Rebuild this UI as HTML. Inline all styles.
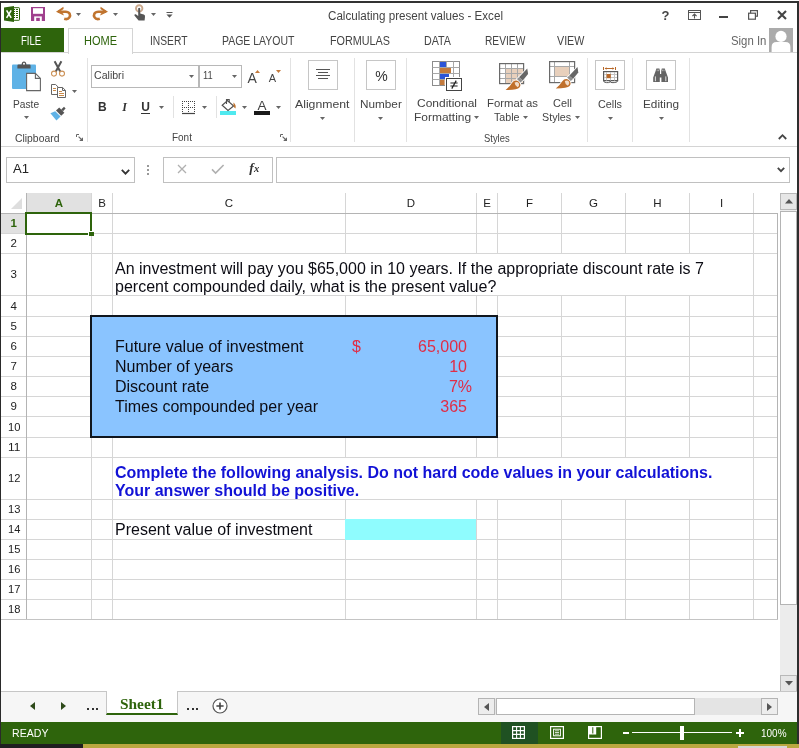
<!DOCTYPE html>
<html><head><meta charset="utf-8"><title>Calculating present values - Excel</title>
<style>
*{margin:0;padding:0;box-sizing:border-box}
html,body{width:799px;height:748px;overflow:hidden;background:#fff}
body{position:relative;will-change:transform;font-family:"Liberation Sans",sans-serif;font-size:12px;color:#444}
.a{position:absolute}
.t{position:absolute;white-space:pre;line-height:1}
.cell{font-size:16px;color:#0c0c14}
.red{color:#e02d46}
.hl{position:absolute;height:1px;background:#d6d6d6}
.vl{position:absolute;width:1px;background:#d6d6d6}
svg{position:absolute;overflow:visible}
</style></head>
<body>
<div class="a" style="left:0px;top:1px;width:799px;height:2px;background:#333;"></div>
<div class="a" style="left:0px;top:1px;width:1px;height:747px;background:#2a2a2a;"></div>
<div class="a" style="left:797px;top:1px;width:2px;height:747px;background:#2e2e2e;"></div>
<div class="t" style="left:328.00px;top:10.34px;font-size:12px;color:#444;transform:scaleX(0.968);transform-origin:0 0;">Calculating present values - Excel</div>
<svg style="left:4px;top:6px" width="17" height="16" viewBox="0 0 17 16"><rect x="9.5" y="1.7" width="6" height="12.6" rx="0.6" fill="#fff" stroke="#2e640c" stroke-width="1"/>
<path d="M10 3.5H11M10 5.5H11M10 7.5H11M10 9.5H11M10 11.5H11M12 3.5H14M12 5.5H14M12 7.5H14M12 9.5H14M12 11.5H14" stroke="#2e640c" stroke-width="1" fill="none"/>
<path d="M0 1.6L10 0V16L0 14.4Z" fill="#2e640c"/>
<path d="M2.6 4.4L7.2 11.8M7.2 4.4L2.6 11.8" stroke="#fff" stroke-width="1.6" fill="none"/></svg>
<svg style="left:31px;top:7px" width="14" height="14" viewBox="0 0 14 14"><rect x="0" y="0" width="14" height="14" fill="#a0408e"/>
<rect x="2" y="1.2" width="10" height="5.6" fill="#fff"/>
<rect x="3.2" y="9.4" width="7.6" height="4.6" fill="#fff"/>
<rect x="5.2" y="10.8" width="3.6" height="3.2" fill="#a0408e"/></svg>
<svg style="left:55px;top:6px" width="18" height="15" viewBox="0 0 18 15"><path d="M8.4 0.8L1 5.8L8.8 9.6L8.2 7.6L4.6 5.8L8.6 3Z" fill="#c0742f"/>
<path d="M3 5.7H10.5C14.8 5.7 15.8 9.2 14.4 11.4C13.4 13 11.4 13.5 9.2 12.8" fill="none" stroke="#c0742f" stroke-width="2.6"/></svg>
<svg style="left:76.0px;top:13px" width="5" height="3.0" viewBox="0 0 5 3.0"><path d="M0 0H5L2.5 3.0Z" fill="#666"/></svg>
<svg style="left:91px;top:6px" width="18" height="15" viewBox="0 0 18 15"><path d="M9.6 0.8L17 5.8L9.2 9.6L9.8 7.6L13.4 5.8L9.4 3Z" fill="#c0742f"/>
<path d="M15 5.7H7.5C3.2 5.7 2.2 9.2 3.6 11.4C4.6 13 6.6 13.5 8.8 12.8" fill="none" stroke="#c0742f" stroke-width="2.6"/></svg>
<svg style="left:113.0px;top:13px" width="5" height="3.0" viewBox="0 0 5 3.0"><path d="M0 0H5L2.5 3.0Z" fill="#666"/></svg>
<svg style="left:133px;top:4px" width="14" height="18" viewBox="0 0 14 18"><circle cx="6.2" cy="4.4" r="3.2" fill="none" stroke="#caa88c" stroke-width="1.9"/>
<path d="M5.2 4.2Q6.2 3.2 7.2 4.2V9.6L10.8 10.6Q12.2 11.2 12 12.8L11.6 16.6H5.6L1.4 11.4Q1.2 10 2.8 10.2L5.2 12Z" fill="#555"/></svg>
<svg style="left:151.0px;top:13px" width="5" height="3.0" viewBox="0 0 5 3.0"><path d="M0 0H5L2.5 3.0Z" fill="#666"/></svg>
<svg style="left:166px;top:12px" width="7" height="6" viewBox="0 0 7 6"><path d="M0.5 0.5H6.5" stroke="#555" stroke-width="1"/><path d="M0.5 2.6H6.5L3.5 5.8Z" fill="#555"/></svg>
<div class="t" style="left:661.52px;top:9.00px;font-size:13px;color:#444;font-weight:700;">?</div>
<svg style="left:688px;top:10px" width="13" height="10" viewBox="0 0 13 10"><rect x="0.5" y="0.5" width="12" height="9" fill="#fff" stroke="#555" stroke-width="1"/>
<path d="M0.5 2.5H12.5" stroke="#555" stroke-width="1"/><path d="M6.5 8.4V4.2M4.4 6.2L6.5 4.1L8.6 6.2" stroke="#555" stroke-width="1.1" fill="none"/></svg>
<div class="a" style="left:719px;top:16px;width:9px;height:2px;background:#444;"></div>
<svg style="left:748px;top:10px" width="10" height="10" viewBox="0 0 10 10"><rect x="2.6" y="0.6" width="6.8" height="5.6" fill="none" stroke="#555" stroke-width="1.2"/>
<rect x="0.6" y="3.2" width="6.8" height="6" fill="#fff" stroke="#555" stroke-width="1.2"/></svg>
<svg style="left:777px;top:10px" width="10" height="10" viewBox="0 0 10 10"><path d="M1 1L9 9M9 1L1 9" stroke="#444" stroke-width="2.1"/></svg>
<div class="a" style="left:1px;top:28px;width:63px;height:25px;background:#2e640c;"></div>
<div class="t" style="left:20.86px;top:35.34px;font-size:12px;color:#fff;transform:scaleX(0.800);transform-origin:0 0;">FILE</div>
<div class="a" style="left:1px;top:52px;width:796px;height:1px;background:#d4d4d4;"></div>
<div class="a" style="left:68px;top:28px;width:65px;height:26px;background:#fff;border:1px solid #d4d4d4;border-bottom:none"></div>
<div class="t" style="left:84.00px;top:35.34px;font-size:12px;color:#2e640c;transform:scaleX(0.917);transform-origin:0 0;">HOME</div>
<div class="t" style="left:149.50px;top:35.34px;font-size:12px;color:#444;transform:scaleX(0.856);transform-origin:0 0;">INSERT</div>
<div class="t" style="left:222.00px;top:35.34px;font-size:12px;color:#444;transform:scaleX(0.874);transform-origin:0 0;">PAGE LAYOUT</div>
<div class="t" style="left:329.50px;top:35.34px;font-size:12px;color:#444;transform:scaleX(0.900);transform-origin:0 0;">FORMULAS</div>
<div class="t" style="left:424.00px;top:35.34px;font-size:12px;color:#444;transform:scaleX(0.893);transform-origin:0 0;">DATA</div>
<div class="t" style="left:484.70px;top:35.34px;font-size:12px;color:#444;transform:scaleX(0.851);transform-origin:0 0;">REVIEW</div>
<div class="t" style="left:557.00px;top:35.34px;font-size:12px;color:#444;transform:scaleX(0.893);transform-origin:0 0;">VIEW</div>
<div class="t" style="left:731.00px;top:34.64px;font-size:12px;color:#666;transform:scaleX(0.948);transform-origin:0 0;">Sign In</div>
<svg style="left:769px;top:28px" width="24" height="24" viewBox="0 0 24 24"><rect width="24" height="24" fill="#ababab"/>
<circle cx="12" cy="8.4" r="5.6" fill="#fff"/>
<path d="M2.6 24V19Q2.6 14 7.6 14H16.4Q21.4 14 21.4 19V24Z" fill="#fff"/></svg>
<div class="a" style="left:1px;top:146px;width:796px;height:1px;background:#d4d4d4;"></div>
<div class="a" style="left:87px;top:58px;width:1px;height:84px;background:#e2e2e2;"></div>
<div class="a" style="left:290px;top:58px;width:1px;height:84px;background:#e2e2e2;"></div>
<div class="a" style="left:354px;top:58px;width:1px;height:84px;background:#e2e2e2;"></div>
<div class="a" style="left:406px;top:58px;width:1px;height:84px;background:#e2e2e2;"></div>
<div class="a" style="left:587px;top:58px;width:1px;height:84px;background:#e2e2e2;"></div>
<div class="a" style="left:632px;top:58px;width:1px;height:84px;background:#e2e2e2;"></div>
<div class="a" style="left:689px;top:58px;width:1px;height:84px;background:#e2e2e2;"></div>
<svg style="left:12px;top:61px" width="29" height="30" viewBox="0 0 29 30"><rect x="0" y="3.6" width="24" height="24.4" rx="1" fill="#5fb2e6"/>
<path d="M5.4 7.6V4.6Q5.4 3.4 6.6 3.4H9.6Q9.8 0.4 12 0.4Q14.2 0.4 14.4 3.4H17.4Q18.6 3.4 18.6 4.6V7.6Z" fill="#555"/>
<circle cx="12" cy="2.8" r="1" fill="#fff"/>
<path d="M14.6 12.4H23.4L28.4 17.4V29.6H14.6Z" fill="#fff" stroke="#666" stroke-width="1.1"/>
<path d="M23.4 12.4V17.4H28.4" fill="none" stroke="#666" stroke-width="1.1"/></svg>
<div class="t" style="left:12.70px;top:99.27px;font-size:11.5px;color:#444;transform:scaleX(0.887);transform-origin:0 0;">Paste</div>
<svg style="left:24.0px;top:116.2px" width="5" height="3.0" viewBox="0 0 5 3.0"><path d="M0 0H5L2.5 3.0Z" fill="#666"/></svg>
<svg style="left:51px;top:61px" width="14" height="16" viewBox="0 0 14 16"><path d="M3.6 0.2L9.2 10.4M10.4 0.2L4.8 10.4" stroke="#555" stroke-width="2" fill="none"/>
<circle cx="3" cy="12.6" r="2.5" fill="#fff" stroke="#cc9258" stroke-width="1.1"/>
<circle cx="11" cy="12.6" r="2.5" fill="#fff" stroke="#cc9258" stroke-width="1.1"/></svg>
<svg style="left:51px;top:84px" width="16" height="14" viewBox="0 0 16 14"><path d="M0.5 0.5H4.6L7.5 3.4V10.5H0.5Z" fill="#fff" stroke="#666" stroke-width="1"/>
<path d="M2 4.5H5M2 6.5H5" stroke="#c98a4a" stroke-width="1"/>
<path d="M6.5 3.5H11.6L14.5 6.4V13.5H6.5Z" fill="#fff" stroke="#666" stroke-width="1"/>
<path d="M11.5 3.5V6.5H14.5" fill="none" stroke="#666" stroke-width="1"/>
<path d="M8 7.5H11M8 9.5H13M8 11.5H13" stroke="#c98a4a" stroke-width="1"/></svg>
<svg style="left:72.0px;top:90px" width="5" height="3.0" viewBox="0 0 5 3.0"><path d="M0 0H5L2.5 3.0Z" fill="#666"/></svg>
<svg style="left:50px;top:106px" width="16" height="15" viewBox="0 0 16 15"><path d="M11.2 3.4L14 0.8L15.6 2.4L13 5.2Z" fill="#555"/>
<path d="M6 4.6L9.2 1.6L14.4 6.8L11.2 9.8Z" fill="#555"/>
<path d="M0.4 7.2L5.2 5.2L10.6 10.6L6.4 14.4Z" fill="#5fb2e6"/></svg>
<div class="t" style="left:14.60px;top:132.57px;font-size:11.5px;color:#444;transform:scaleX(0.902);transform-origin:0 0;">Clipboard</div>
<svg style="left:76px;top:134px" width="8" height="8" viewBox="0 0 8 8"><path d="M0.5 3V0.5H3" fill="none" stroke="#666" stroke-width="1"/><path d="M2.6 2.6L6 6" stroke="#666" stroke-width="1.1"/><path d="M7 3.2V7H3.2Z" fill="#666"/></svg>
<div class="a" style="left:91px;top:65px;width:108px;height:23px;background:#fff;border:1px solid #b8b8b8;"></div>
<div class="a" style="left:199px;top:65px;width:43px;height:23px;background:#fff;border:1px solid #b8b8b8;"></div>
<div class="t" style="left:94.00px;top:70.27px;font-size:11.5px;color:#444;transform:scaleX(0.920);transform-origin:0 0;">Calibri</div>
<svg style="left:189.0px;top:75.2px" width="5" height="3.0" viewBox="0 0 5 3.0"><path d="M0 0H5L2.5 3.0Z" fill="#666"/></svg>
<div class="t" style="left:202.80px;top:69.77px;font-size:11.5px;color:#444;transform:scaleX(0.812);transform-origin:0 0;">11</div>
<svg style="left:232.0px;top:75.2px" width="5" height="3.0" viewBox="0 0 5 3.0"><path d="M0 0H5L2.5 3.0Z" fill="#666"/></svg>
<div class="t" style="left:247.58px;top:70.95px;font-size:14px;color:#444;">A</div>
<svg style="left:255px;top:70px" width="5" height="3" viewBox="0 0 5 3"><path d="M0 3H5L2.5 0Z" fill="#c47a3c"/></svg>
<div class="t" style="left:268.83px;top:73.49px;font-size:11px;color:#444;">A</div>
<svg style="left:276px;top:70px" width="5" height="3" viewBox="0 0 5 3"><path d="M0 0H5L2.5 3Z" fill="#c47a3c"/></svg>
<div class="t" style="left:98.06px;top:101.34px;font-size:12px;color:#333;font-weight:700;">B</div>
<div class="t" style="left:122.16px;top:101.45px;font-size:12px;color:#333;font-style:italic;font-family:'Liberation Serif',serif;font-weight:bold">I</div>
<div class="t" style="left:141.16px;top:101.14px;font-size:12px;color:#333;font-weight:700;">U</div>
<div class="a" style="left:141px;top:113px;width:9px;height:1px;background:#333;"></div>
<svg style="left:159.0px;top:106px" width="5" height="3.0" viewBox="0 0 5 3.0"><path d="M0 0H5L2.5 3.0Z" fill="#666"/></svg>
<div class="a" style="left:173px;top:96px;width:1px;height:22px;background:#e2e2e2;"></div>
<svg style="left:182px;top:101px" width="13" height="13" viewBox="0 0 13 13"><path d="M0 0.5H13M0 6.5H13" stroke="#444" stroke-width="1" stroke-dasharray="1 1" fill="none"/>
<path d="M0.5 0V11M6.5 0V11M12.5 0V11" stroke="#444" stroke-width="1" stroke-dasharray="1 1" fill="none"/>
<path d="M0 12.5H13" stroke="#444" stroke-width="1.2"/></svg>
<svg style="left:202.0px;top:106px" width="5" height="3.0" viewBox="0 0 5 3.0"><path d="M0 0H5L2.5 3.0Z" fill="#666"/></svg>
<div class="a" style="left:216px;top:96px;width:1px;height:22px;background:#e2e2e2;"></div>
<svg style="left:220px;top:98px" width="16" height="17" viewBox="0 0 16 17"><rect x="0" y="13" width="16" height="4" fill="#4fe9ef"/>
<path d="M7.6 2.6L13.6 8L8 12.4L2.2 7.2Z" fill="#fff" stroke="#505050" stroke-width="1.2"/>
<path d="M6.5 6V1.5H9.2V4.4" fill="none" stroke="#505050" stroke-width="1.1"/>
<path d="M13.4 4.4Q16.6 7 15.4 10.6Q13.6 9.4 13.6 8Z" fill="#c0742f"/></svg>
<svg style="left:242.0px;top:106px" width="5" height="3.0" viewBox="0 0 5 3.0"><path d="M0 0H5L2.5 3.0Z" fill="#666"/></svg>
<div class="t" style="left:257.49px;top:99.07px;font-size:13.5px;color:#444;">A</div>
<div class="a" style="left:254px;top:111px;width:16px;height:4px;background:#1a1a1a;"></div>
<svg style="left:276.0px;top:106px" width="5" height="3.0" viewBox="0 0 5 3.0"><path d="M0 0H5L2.5 3.0Z" fill="#666"/></svg>
<div class="t" style="left:171.80px;top:132.37px;font-size:11.5px;color:#444;transform:scaleX(0.865);transform-origin:0 0;">Font</div>
<svg style="left:280px;top:134px" width="8" height="8" viewBox="0 0 8 8"><path d="M0.5 3V0.5H3" fill="none" stroke="#666" stroke-width="1"/><path d="M2.6 2.6L6 6" stroke="#666" stroke-width="1.1"/><path d="M7 3.2V7H3.2Z" fill="#666"/></svg>
<div class="a" style="left:308px;top:60px;width:30px;height:30px;background:#fff;border:1px solid #c6c6c6;"></div>
<div class="a" style="left:316px;top:69px;width:14px;height:1px;background:#555;"></div>
<div class="a" style="left:318px;top:72px;width:10px;height:1px;background:#555;"></div>
<div class="a" style="left:316px;top:75px;width:14px;height:1px;background:#555;"></div>
<div class="a" style="left:318px;top:78px;width:10px;height:1px;background:#555;"></div>
<div class="t" style="left:295.20px;top:99.37px;font-size:11.5px;color:#444;transform:scaleX(1.064);transform-origin:0 0;">Alignment</div>
<svg style="left:320.0px;top:117.3px" width="5" height="3.0" viewBox="0 0 5 3.0"><path d="M0 0H5L2.5 3.0Z" fill="#666"/></svg>
<div class="a" style="left:366px;top:60px;width:30px;height:30px;background:#fff;border:1px solid #c6c6c6;"></div>
<div class="t" style="left:375.27px;top:68.65px;font-size:14px;color:#333;">%</div>
<div class="t" style="left:359.60px;top:99.37px;font-size:11.5px;color:#444;transform:scaleX(1.022);transform-origin:0 0;">Number</div>
<svg style="left:378.0px;top:117.3px" width="5" height="3.0" viewBox="0 0 5 3.0"><path d="M0 0H5L2.5 3.0Z" fill="#666"/></svg>
<svg style="left:432px;top:61px" width="30" height="30" viewBox="0 0 30 30"><rect x="0.5" y="0.5" width="27" height="24" fill="#fff" stroke="#8c8c8c" stroke-width="1"/>
<path d="M0.5 6.5H27.5M0.5 12.5H27.5M0.5 18.5H27.5M7.5 0.5V24.5M14.5 0.5V24.5M21.5 0.5V24.5" stroke="#a8a8a8" stroke-width="1" fill="none"/>
<rect x="8" y="1" width="6" height="5" fill="#2c55d8"/>
<rect x="8" y="7" width="11" height="5" fill="#c47a3c"/>
<rect x="8" y="13" width="9" height="5" fill="#2c55d8"/>
<rect x="8" y="19" width="4.6" height="5" fill="#c47a3c"/>
<rect x="13" y="16" width="18" height="15" fill="#fff"/>
<rect x="14.5" y="17.5" width="15" height="12" fill="#fff" stroke="#444" stroke-width="1"/>
<path d="M18.4 22H25.6M18.4 25H25.6M24.2 19.6L19.8 27.6" stroke="#222" stroke-width="1.2" fill="none"/></svg>
<div class="t" style="left:417.30px;top:97.57px;font-size:11.5px;color:#444;transform:scaleX(1.043);transform-origin:0 0;">Conditional</div>
<div class="t" style="left:413.50px;top:111.77px;font-size:11.5px;color:#444;transform:scaleX(1.039);transform-origin:0 0;">Formatting</div>
<svg style="left:474.0px;top:116.2px" width="5" height="3.0" viewBox="0 0 5 3.0"><path d="M0 0H5L2.5 3.0Z" fill="#666"/></svg>
<svg style="left:499px;top:62px" width="30" height="30" viewBox="0 0 30 30"><rect x="7" y="7" width="17.5" height="14.5" fill="#e8d0bc"/>
<path d="M0.5 6.5H24.5M0.5 11.5H24.5M0.5 16.5H24.5M6.5 1.5V21.5M12.5 1.5V21.5M18.5 1.5V21.5" stroke="#a8a8a8" stroke-width="1" fill="none"/>
<rect x="0.6" y="1.6" width="24" height="20" fill="none" stroke="#6a6a6a" stroke-width="1.2"/><g transform="translate(0,0)"><path d="M28.25 6.5L29.1 12.1L23.75 18.4L20 15.25Z" fill="#fff" stroke="#fff" stroke-width="1.6" stroke-linejoin="round"/>
<path d="M20 15.25L23.75 18.4L21.6 20.5L17.9 17.1Z" fill="#fff" stroke="#fff" stroke-width="1.6"/>
<path d="M6.6 28Q10.4 25 12.9 20.9Q16 17 19.6 19.4Q22.8 22.4 20.4 25.6Q18.4 28 6.6 28Z" fill="#fff" stroke="#fff" stroke-width="1.6"/><path d="M28.25 6.5L29.1 12.1L23.75 18.4L20 15.25Z" fill="#666"/>
<path d="M20 15.25L23.75 18.4L21.6 20.5L17.9 17.1Z" fill="#8e8e8e"/>
<path d="M6.6 28Q10.4 25 12.9 20.9Q16 17 19.6 19.4Q22.8 22.4 20.4 25.6Q18.4 28 6.6 28Z" fill="#c0702c"/>
<path d="M15.6 20.6Q18.4 19 20 21.4Q20.6 23.6 18.6 25.2Q15.8 24 15.6 20.6Z" fill="#f2dcc8"/></g></svg>
<div class="t" style="left:486.80px;top:97.57px;font-size:11.5px;color:#444;transform:scaleX(0.985);transform-origin:0 0;">Format as</div>
<div class="t" style="left:494.30px;top:111.77px;font-size:11.5px;color:#444;transform:scaleX(0.927);transform-origin:0 0;">Table</div>
<svg style="left:523.0px;top:116.2px" width="5" height="3.0" viewBox="0 0 5 3.0"><path d="M0 0H5L2.5 3.0Z" fill="#666"/></svg>
<svg style="left:549px;top:60px" width="31" height="30" viewBox="0 0 31 30"><rect x="6" y="7" width="14" height="9" fill="#e8d0bc"/>
<path d="M0.5 6.5H25.5M0.5 16.5H25.5M5.5 1.5V22.5M20.5 1.5V22.5" stroke="#a8a8a8" stroke-width="1" fill="none"/>
<rect x="0.6" y="1.6" width="25" height="21" fill="none" stroke="#6a6a6a" stroke-width="1.2"/><g transform="translate(0.2,0.5)"><path d="M28.25 6.5L29.1 12.1L23.75 18.4L20 15.25Z" fill="#fff" stroke="#fff" stroke-width="1.6" stroke-linejoin="round"/>
<path d="M20 15.25L23.75 18.4L21.6 20.5L17.9 17.1Z" fill="#fff" stroke="#fff" stroke-width="1.6"/>
<path d="M6.6 28Q10.4 25 12.9 20.9Q16 17 19.6 19.4Q22.8 22.4 20.4 25.6Q18.4 28 6.6 28Z" fill="#fff" stroke="#fff" stroke-width="1.6"/><path d="M28.25 6.5L29.1 12.1L23.75 18.4L20 15.25Z" fill="#666"/>
<path d="M20 15.25L23.75 18.4L21.6 20.5L17.9 17.1Z" fill="#8e8e8e"/>
<path d="M6.6 28Q10.4 25 12.9 20.9Q16 17 19.6 19.4Q22.8 22.4 20.4 25.6Q18.4 28 6.6 28Z" fill="#c0702c"/>
<path d="M15.6 20.6Q18.4 19 20 21.4Q20.6 23.6 18.6 25.2Q15.8 24 15.6 20.6Z" fill="#f2dcc8"/></g></svg>
<div class="t" style="left:552.50px;top:97.57px;font-size:11.5px;color:#444;transform:scaleX(0.949);transform-origin:0 0;">Cell</div>
<div class="t" style="left:541.90px;top:111.77px;font-size:11.5px;color:#444;transform:scaleX(0.932);transform-origin:0 0;">Styles</div>
<svg style="left:575.0px;top:116.2px" width="5" height="3.0" viewBox="0 0 5 3.0"><path d="M0 0H5L2.5 3.0Z" fill="#666"/></svg>
<div class="t" style="left:484.00px;top:132.57px;font-size:11.5px;color:#444;transform:scaleX(0.817);transform-origin:0 0;">Styles</div>
<div class="a" style="left:595px;top:60px;width:30px;height:30px;background:#fff;border:1px solid #c6c6c6;"></div>
<svg style="left:603px;top:67px" width="15" height="16" viewBox="0 0 15 16"><path d="M0.5 0V3M12.5 0V3M2 1.5H11" stroke="#b8692a" stroke-width="1" fill="none"/>
<path d="M3.6 0.2L1.6 1.5L3.6 2.8ZM9.4 0.2L11.4 1.5L9.4 2.8Z" fill="#b8692a"/>
<rect x="0.6" y="4.6" width="14" height="9" fill="#fff" stroke="#5a5a5a" stroke-width="1.2"/>
<path d="M1 7.5H14M1 10.5H14M3.5 5V13.5M7.5 5V13.5M11.5 5V13.5" stroke="#c4c4c4" stroke-width="1" fill="none"/>
<rect x="3.6" y="7" width="4.2" height="4.2" fill="#b8692a"/>
<path d="M0.6 13.6Q0.6 15.6 3.4 15.6H5.4Q7.2 15.6 7.2 14.2Q7.2 15.6 9 15.6H11.2Q14.6 15.6 14.6 13.6" fill="none" stroke="#5a5a5a" stroke-width="1"/></svg>
<div class="t" style="left:598.00px;top:99.37px;font-size:11.5px;color:#444;transform:scaleX(0.939);transform-origin:0 0;">Cells</div>
<svg style="left:608.0px;top:117.3px" width="5" height="3.0" viewBox="0 0 5 3.0"><path d="M0 0H5L2.5 3.0Z" fill="#666"/></svg>
<div class="a" style="left:646px;top:60px;width:30px;height:30px;background:#fff;border:1px solid #c6c6c6;"></div>
<svg style="left:653px;top:68px" width="16" height="14" viewBox="0 0 16 14"><path d="M2.6 3L3.4 0.6H6.4L7 3V6H8.2V3L8.8 0.6H11.8L12.6 3L15 9.6V14H8.4V9.4H6.8V14H0.2V9.6Z" fill="#646464"/>
<path d="M2.4 8.4V13.2M12.8 8.4V13.2" stroke="#fff" stroke-width="0.8"/>
<path d="M4.2 1.6V3.2M5.6 1.6V3.2M9.6 1.6V3.2M11 1.6V3.2" stroke="#ddd" stroke-width="0.6"/></svg>
<div class="t" style="left:643.00px;top:99.37px;font-size:11.5px;color:#444;transform:scaleX(1.024);transform-origin:0 0;">Editing</div>
<svg style="left:659.0px;top:117.3px" width="5" height="3.0" viewBox="0 0 5 3.0"><path d="M0 0H5L2.5 3.0Z" fill="#666"/></svg>
<svg style="left:778px;top:134px" width="9" height="6" viewBox="0 0 9 6"><path d="M0.8 5L4.5 1.2L8.2 5" fill="none" stroke="#444" stroke-width="1.8"/></svg>
<div class="a" style="left:6px;top:157px;width:129px;height:26px;background:#fff;border:1px solid #c0c0c0;"></div>
<div class="t" style="left:13.00px;top:163.02px;font-size:12.5px;color:#222;transform:scaleX(1.046);transform-origin:0 0;">A1</div>
<svg style="left:121px;top:169px" width="9" height="6" viewBox="0 0 9 6"><path d="M0.8 0.8L4.5 4.6L8.2 0.8" fill="none" stroke="#333" stroke-width="1.8"/></svg>
<div class="a" style="left:147px;top:165px;width:1.5px;height:1.5px;background:#999;"></div>
<div class="a" style="left:147px;top:169px;width:1.5px;height:1.5px;background:#999;"></div>
<div class="a" style="left:147px;top:173px;width:1.5px;height:1.5px;background:#999;"></div>
<div class="a" style="left:163px;top:157px;width:110px;height:26px;background:#fff;border:1px solid #c0c0c0;"></div>
<svg style="left:177px;top:164px" width="10" height="10" viewBox="0 0 10 10"><path d="M1 1L9 9M9 1L1 9" stroke="#b0b0b0" stroke-width="1.3"/></svg>
<svg style="left:211px;top:164px" width="14" height="10" viewBox="0 0 14 10"><path d="M1 5.4L4.6 9L12.6 1" fill="none" stroke="#b0b0b0" stroke-width="1.6"/></svg>
<div class="t" style="left:249.25px;top:161.49px;font-size:13.5px;color:#333;font-weight:700;font-style:italic;font-family:'Liberation Serif',serif">f</div>
<div class="t" style="left:253.88px;top:164.21px;font-size:10.5px;color:#333;font-weight:700;font-style:italic;font-family:'Liberation Serif',serif">x</div>
<div class="a" style="left:276px;top:157px;width:514px;height:26px;background:#fff;border:1px solid #c0c0c0;"></div>
<svg style="left:777px;top:167px" width="8" height="6" viewBox="0 0 8 6"><path d="M0.8 0.8L4 4.2L7.2 0.8" fill="none" stroke="#444" stroke-width="1.8"/></svg>
<div class="a" style="left:27px;top:193px;width:64px;height:20px;background:#e1e1e1;"></div>
<div class="a" style="left:1px;top:214px;width:25px;height:19px;background:#e1e1e1;"></div>
<svg style="left:11px;top:198px" width="11" height="11" viewBox="0 0 11 11"><path d="M11 0V11H0Z" fill="#dedede"/></svg>
<div class="hl" style="left:1px;top:233px;width:777px"></div>
<div class="hl" style="left:1px;top:253px;width:777px"></div>
<div class="hl" style="left:1px;top:295px;width:777px"></div>
<div class="hl" style="left:1px;top:316px;width:777px"></div>
<div class="hl" style="left:1px;top:336px;width:777px"></div>
<div class="hl" style="left:1px;top:356px;width:777px"></div>
<div class="hl" style="left:1px;top:376px;width:777px"></div>
<div class="hl" style="left:1px;top:396px;width:777px"></div>
<div class="hl" style="left:1px;top:416px;width:777px"></div>
<div class="hl" style="left:1px;top:437px;width:777px"></div>
<div class="hl" style="left:1px;top:457px;width:777px"></div>
<div class="hl" style="left:1px;top:499px;width:777px"></div>
<div class="hl" style="left:1px;top:519px;width:777px"></div>
<div class="hl" style="left:1px;top:539px;width:777px"></div>
<div class="hl" style="left:1px;top:559px;width:777px"></div>
<div class="hl" style="left:1px;top:579px;width:777px"></div>
<div class="hl" style="left:1px;top:599px;width:777px"></div>
<div class="hl" style="left:1px;top:619px;width:777px"></div>
<div class="vl" style="left:26px;top:193px;height:427px"></div>
<div class="vl" style="left:91px;top:193px;height:427px"></div>
<div class="vl" style="left:112px;top:193px;height:427px"></div>
<div class="vl" style="left:345px;top:193px;height:427px"></div>
<div class="vl" style="left:476px;top:193px;height:427px"></div>
<div class="vl" style="left:497px;top:193px;height:427px"></div>
<div class="vl" style="left:561px;top:193px;height:427px"></div>
<div class="vl" style="left:625px;top:193px;height:427px"></div>
<div class="vl" style="left:689px;top:193px;height:427px"></div>
<div class="vl" style="left:753px;top:193px;height:427px"></div>
<div class="a" style="left:113px;top:254px;width:640px;height:41px;background:#fff;"></div>
<div class="a" style="left:113px;top:458px;width:640px;height:41px;background:#fff;"></div>
<div class="a" style="left:1px;top:213px;width:777px;height:1px;background:#b4b4b4;"></div>
<div class="a" style="left:26px;top:193px;width:1px;height:427px;background:#b4b4b4;"></div>
<div class="a" style="left:777px;top:213px;width:1px;height:407px;background:#b4b4b4;"></div>
<div class="a" style="left:1px;top:619px;width:777px;height:1px;background:#c4c4c4;"></div>
<div class="t" style="left:54.84px;top:198.27px;font-size:11.5px;color:#2e640c;font-weight:700;">A</div>
<div class="t" style="left:98.16px;top:198.27px;font-size:11.5px;color:#222;">B</div>
<div class="t" style="left:224.84px;top:198.27px;font-size:11.5px;color:#222;">C</div>
<div class="t" style="left:406.84px;top:198.27px;font-size:11.5px;color:#222;">D</div>
<div class="t" style="left:483.16px;top:198.27px;font-size:11.5px;color:#222;">E</div>
<div class="t" style="left:525.98px;top:198.27px;font-size:11.5px;color:#222;">F</div>
<div class="t" style="left:589.02px;top:198.27px;font-size:11.5px;color:#222;">G</div>
<div class="t" style="left:653.34px;top:198.27px;font-size:11.5px;color:#222;">H</div>
<div class="t" style="left:719.90px;top:198.27px;font-size:11.5px;color:#222;">I</div>
<div class="t" style="left:10.60px;top:218.37px;font-size:11.5px;color:#2e640c;font-weight:700;">1</div>
<div class="t" style="left:10.60px;top:238.37px;font-size:11.5px;color:#222;">2</div>
<div class="t" style="left:10.60px;top:269.37px;font-size:11.5px;color:#222;">3</div>
<div class="t" style="left:10.60px;top:300.87px;font-size:11.5px;color:#222;">4</div>
<div class="t" style="left:10.60px;top:321.37px;font-size:11.5px;color:#222;">5</div>
<div class="t" style="left:10.60px;top:341.37px;font-size:11.5px;color:#222;">6</div>
<div class="t" style="left:10.60px;top:361.37px;font-size:11.5px;color:#222;">7</div>
<div class="t" style="left:10.60px;top:381.37px;font-size:11.5px;color:#222;">8</div>
<div class="t" style="left:10.60px;top:401.37px;font-size:11.5px;color:#222;">9</div>
<div class="t" style="left:7.60px;top:421.87px;font-size:11.5px;color:#222;transform:scaleX(0.969);transform-origin:0 0;">10</div>
<div class="t" style="left:7.60px;top:442.37px;font-size:11.5px;color:#222;transform:scaleX(1.037);transform-origin:0 0;">11</div>
<div class="t" style="left:7.60px;top:473.37px;font-size:11.5px;color:#222;transform:scaleX(0.969);transform-origin:0 0;">12</div>
<div class="t" style="left:7.60px;top:504.37px;font-size:11.5px;color:#222;transform:scaleX(0.969);transform-origin:0 0;">13</div>
<div class="t" style="left:7.60px;top:524.37px;font-size:11.5px;color:#222;transform:scaleX(0.969);transform-origin:0 0;">14</div>
<div class="t" style="left:7.60px;top:544.37px;font-size:11.5px;color:#222;transform:scaleX(0.969);transform-origin:0 0;">15</div>
<div class="t" style="left:7.60px;top:564.37px;font-size:11.5px;color:#222;transform:scaleX(0.969);transform-origin:0 0;">16</div>
<div class="t" style="left:7.60px;top:584.37px;font-size:11.5px;color:#222;transform:scaleX(0.969);transform-origin:0 0;">17</div>
<div class="t" style="left:7.60px;top:604.37px;font-size:11.5px;color:#222;transform:scaleX(0.969);transform-origin:0 0;">18</div>
<div class="a" style="left:90px;top:315px;width:408px;height:123px;background:#8ac4ff;border:2px solid #10161e;"></div>
<div class="a" style="left:345px;top:519px;width:131px;height:21px;background:#8ffcfe;"></div>
<div class="a" style="left:25px;top:212px;width:67px;height:23px;border:2px solid #2e640c;"></div>
<div class="a" style="left:88px;top:231px;width:6px;height:5px;background:#2e640c;border-left:1px solid #fff;border-top:1px solid #fff"></div>
<div class="t cell" style="left:115px;top:261.0px;">An investment will pay you $65,000 in 10 years. If the appropriate discount rate is 7</div>
<div class="t cell" style="left:115px;top:279.0px;">percent compounded daily, what is the present value?</div>
<div class="t cell" style="left:115px;top:339.0px;">Future value of investment</div>
<div class="t cell red" style="left:367px;width:100px;text-align:right;top:339.0px">65,000</div>
<div class="t cell" style="left:115px;top:359.0px;">Number of years</div>
<div class="t cell red" style="left:367px;width:100px;text-align:right;top:359.0px">10</div>
<div class="t cell" style="left:115px;top:379.0px;">Discount rate</div>
<div class="t cell red" style="left:372px;width:100px;text-align:right;top:379.0px">7%</div>
<div class="t cell" style="left:115px;top:399.0px;">Times compounded per year</div>
<div class="t cell red" style="left:367px;width:100px;text-align:right;top:399.0px">365</div>
<div class="t cell red" style="left:352px;top:339.0px;">$</div>
<div class="t cell" style="left:115px;top:465.0px;color:#1212d6;font-weight:bold">Complete the following analysis. Do not hard code values in your calculations.</div>
<div class="t cell" style="left:115px;top:483.0px;color:#1212d6;font-weight:bold">Your answer should be positive.</div>
<div class="t cell" style="left:115px;top:522.0px;">Present value of investment</div>
<div class="a" style="left:780px;top:193px;width:17px;height:498px;background:#ececec;"></div>
<div class="a" style="left:780px;top:193px;width:17px;height:17px;background:#e6e6e6;border:1px solid #b8b8b8;"></div>
<svg style="left:785px;top:199px" width="8" height="5" viewBox="0 0 8 5"><path d="M0 4.6H8L4 0Z" fill="#555"/></svg>
<div class="a" style="left:780px;top:211px;width:17px;height:394px;background:#fff;border:1px solid #b4b4b4;"></div>
<div class="a" style="left:780px;top:675px;width:17px;height:17px;background:#e6e6e6;border:1px solid #b8b8b8;"></div>
<svg style="left:785px;top:681px" width="8" height="5" viewBox="0 0 8 5"><path d="M0 0H8L4 4.6Z" fill="#555"/></svg>
<div class="a" style="left:1px;top:691px;width:796px;height:31px;background:#f6f6f6;"></div>
<div class="a" style="left:1px;top:691px;width:796px;height:1px;background:#c6c6c6;"></div>
<div class="a" style="left:106px;top:691px;width:72px;height:24px;background:#fff;border-left:1px solid #c6c6c6;border-right:1px solid #c6c6c6;border-bottom:2px solid #2e640c"></div>
<div class="t" style="left:120.00px;top:698.38px;font-size:14px;color:#2e640c;font-weight:700;transform:scaleX(1.099);transform-origin:0 0;font-family:'Liberation Serif',serif">Sheet1</div>
<svg style="left:30px;top:702px" width="5" height="8" viewBox="0 0 5 8"><path d="M5 0V8L0 4Z" fill="#2e4a1a"/></svg>
<svg style="left:61px;top:702px" width="5" height="8" viewBox="0 0 5 8"><path d="M0 0V8L5 4Z" fill="#2e4a1a"/></svg>
<div class="a" style="left:87px;top:708px;width:2px;height:2px;background:#333;"></div>
<div class="a" style="left:91.5px;top:708px;width:2px;height:2px;background:#333;"></div>
<div class="a" style="left:96px;top:708px;width:2px;height:2px;background:#333;"></div>
<div class="a" style="left:187px;top:708px;width:2px;height:2px;background:#333;"></div>
<div class="a" style="left:191.5px;top:708px;width:2px;height:2px;background:#333;"></div>
<div class="a" style="left:196px;top:708px;width:2px;height:2px;background:#333;"></div>
<svg style="left:212px;top:698px" width="16" height="16" viewBox="0 0 16 16"><circle cx="8" cy="8" r="7" fill="#fff" stroke="#555" stroke-width="1.2"/><path d="M4.4 8H11.6M8 4.4V11.6" stroke="#444" stroke-width="1.6"/></svg>
<div class="a" style="left:478px;top:698px;width:300px;height:17px;background:#e4e4e4;"></div>
<div class="a" style="left:478px;top:698px;width:17px;height:17px;background:#ededed;border:1px solid #b4b4b4;"></div>
<svg style="left:484px;top:702.5px" width="5" height="8" viewBox="0 0 5 8"><path d="M5 0V8L0 4Z" fill="#555"/></svg>
<div class="a" style="left:496px;top:698px;width:199px;height:17px;background:#fff;border:1px solid #b4b4b4;"></div>
<div class="a" style="left:761px;top:698px;width:17px;height:17px;background:#ededed;border:1px solid #b4b4b4;"></div>
<svg style="left:767px;top:702.5px" width="5" height="8" viewBox="0 0 5 8"><path d="M0 0V8L5 4Z" fill="#555"/></svg>
<div class="a" style="left:1px;top:722px;width:796px;height:22px;background:#2e640c;"></div>
<div class="t" style="left:12.00px;top:727.69px;font-size:11px;color:#fff;transform:scaleX(0.963);transform-origin:0 0;">READY</div>
<div class="a" style="left:501px;top:722px;width:37px;height:22px;background:#1f5122;"></div>
<svg style="left:512px;top:726px" width="13" height="13" viewBox="0 0 13 13"><rect x="0.6" y="0.6" width="11.8" height="11.8" fill="none" stroke="#fff" stroke-width="1.2"/><path d="M0.6 4.6H12.4M0.6 8.4H12.4M4.6 0.6V12.4M8.4 0.6V12.4" stroke="#fff" stroke-width="1.1"/></svg>
<svg style="left:550px;top:726px" width="14" height="13" viewBox="0 0 14 13"><rect x="0.6" y="0.6" width="12.8" height="11.8" fill="none" stroke="#fff" stroke-width="1.2"/><rect x="3.6" y="3.2" width="6.8" height="6.6" fill="none" stroke="#fff" stroke-width="1"/><path d="M5 4.8H9M5 6.5H9M5 8.2H9" stroke="#fff" stroke-width="0.8"/></svg>
<svg style="left:588px;top:726px" width="14" height="13" viewBox="0 0 14 13"><rect x="0.6" y="0.6" width="12.8" height="11.8" fill="none" stroke="#fff" stroke-width="1.2"/><path d="M1 1H4.3V7.4H5.3V1H8.2V8.4H1Z" fill="#fff"/></svg>
<div class="a" style="left:622.5px;top:731.6px;width:6px;height:2px;background:#fff;"></div>
<div class="a" style="left:632px;top:732px;width:100px;height:1px;background:#fff;"></div>
<div class="a" style="left:680px;top:726px;width:4px;height:13.5px;background:#fff;"></div>
<div class="a" style="left:736px;top:731.6px;width:8px;height:2px;background:#fff;"></div>
<div class="a" style="left:739px;top:728.6px;width:2px;height:8px;background:#fff;"></div>
<div class="t" style="left:761.20px;top:727.69px;font-size:11px;color:#fff;transform:scaleX(0.906);transform-origin:0 0;">100%</div>
<div class="a" style="left:0px;top:744px;width:799px;height:4px;background:#b9a840;"></div>
<div class="a" style="left:0px;top:744px;width:83px;height:4px;background:#1f1f1f;"></div>
<div class="a" style="left:738px;top:746px;width:49px;height:2px;background:#d8d8d8;"></div>
</body></html>
